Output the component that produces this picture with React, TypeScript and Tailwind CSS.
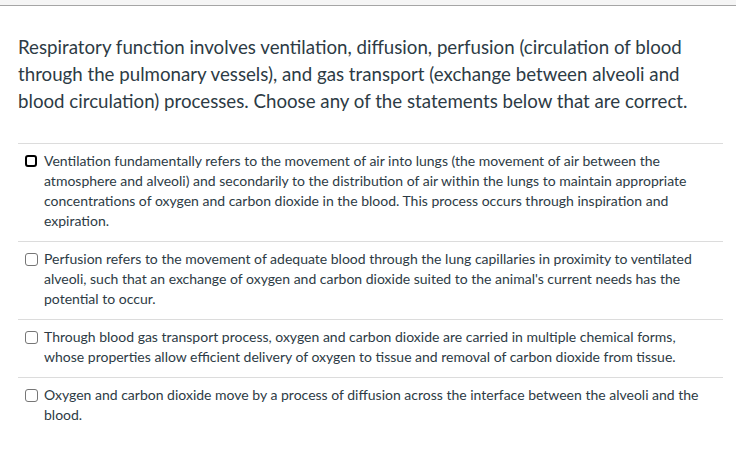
import React from "react";

const items = [
  "Ventilation fundamentally refers to the movement of air into lungs (the movement of air between the atmosphere and alveoli) and secondarily to the distribution of air within the lungs to maintain appropriate concentrations of oxygen and carbon dioxide in the blood. This process occurs through inspiration and expiration.",
  "Perfusion refers to the movement of adequate blood through the lung capillaries in proximity to ventilated alveoli, such that an exchange of oxygen and carbon dioxide suited to the animal's current needs has the potential to occur.",
  "Through blood gas transport process, oxygen and carbon dioxide are carried in multiple chemical forms, whose properties allow efficient delivery of oxygen to tissue and removal of carbon dioxide from tissue.",
  "Oxygen and carbon dioxide move by a process of diffusion across the interface between the alveoli and the blood.",
];

export default function App() {
  return (
    <div className="w-[736px] h-[453px] bg-white text-[#2d3b45]" style={{ fontFamily: "Lato, 'Noto Sans', sans-serif" }}>
      <div className="h-[5px] bg-[#f5f5f5]" />
      <div className="h-px bg-[#a5a5a5]" />
      <div className="pl-[18px] pr-[13px]">
        <p className="pt-[28px] pb-[28px] text-[18.7px] leading-[27px]">
          Respiratory function involves ventilation, diffusion, perfusion (circulation of blood through the pulmonary vessels), and gas transport (exchange between alveoli and blood circulation) processes. Choose any of the statements below that are correct.
        </p>
        {items.map((t, i) => (
          <div key={i} className="border-t border-[#dcdcdc] flex pt-[7px] pb-[10px]">
            <div className="w-[26px] shrink-0 pl-[7px] pt-[4px]">
              {i === 0 ? (
                <div className="w-[12px] h-[12px] rounded-[3px] border-[2px] border-black" />
              ) : (
                <div className="w-[13px] h-[13px] rounded-[3px] border border-[#767676] bg-white" />
              )}
            </div>
            <p className="text-[14px] leading-[20px] pr-[12px]">{t}</p>
          </div>
        ))}
      </div>
    </div>
  );
}
